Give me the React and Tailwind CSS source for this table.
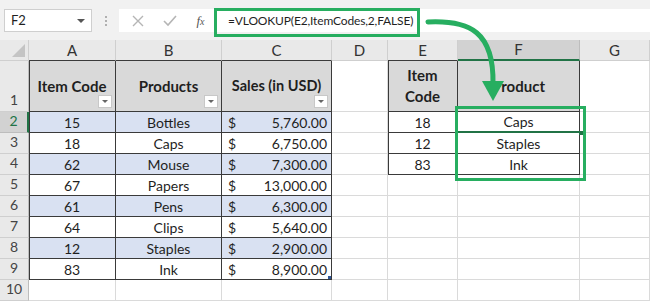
import React from "react";

const cols = ["A", "B", "C", "D", "E", "F", "G"];

const data = [
  { code: "15", product: "Bottles", sales: "5,760.00" },
  { code: "18", product: "Caps", sales: "6,750.00" },
  { code: "62", product: "Mouse", sales: "7,300.00" },
  { code: "67", product: "Papers", sales: "13,000.00" },
  { code: "61", product: "Pens", sales: "6,300.00" },
  { code: "64", product: "Clips", sales: "5,640.00" },
  { code: "12", product: "Staples", sales: "2,900.00" },
  { code: "83", product: "Ink", sales: "8,900.00" },
];

const lookup = [
  { code: "18", product: "Caps" },
  { code: "12", product: "Staples" },
  { code: "83", product: "Ink" },
];

const FilterButton = () => (
  <div className="absolute right-[3px] bottom-[3px] w-[14px] h-[13px] bg-white border border-[#c8c8c8] flex items-center justify-center">
    <div className="w-0 h-0 border-l-[3px] border-r-[3px] border-t-[3px] border-l-transparent border-r-transparent border-t-[#666]" />
  </div>
);

const RowHead = ({ n, active }) => (
  <div
    className={`flex items-end justify-center pb-[1px] border-b border-r text-[14px] ${
      active
        ? "bg-[#d2d2d2] text-[#217346] border-b-[#bdbdbd] border-r-[#217346] border-r-2"
        : "bg-[#e9e9e9] text-[#444] border-b-[#cfcfcf] border-r-[#bdbdbd]"
    }`}
  >
    {n}
  </div>
);

const Blank = () => <div className="bg-white border-r border-b border-[#dadada]" />;

export default function App() {
  return (
    <div
      className="relative w-[650px] h-[304px] overflow-hidden bg-white text-[#1f1f1f]"
      style={{ fontFamily: "Lato, 'Open Sans', sans-serif" }}
    >
      {/* formula bar */}
      <div className="h-[40px] bg-[#f1f1f1] flex items-start pt-[9px] pl-[4px]">
        <div className="w-[88px] h-[23px] bg-white border border-[#cfcfcf] flex items-center justify-between pl-[6px] pr-[6px] text-[13px]">
          <span>F2</span>
          <div className="w-0 h-0 border-l-[4px] border-r-[4px] border-t-[4px] border-l-transparent border-r-transparent border-t-[#555]" />
        </div>
        <div className="w-[27px] h-[23px] flex flex-col items-center justify-center gap-[2px]">
          <div className="w-[2px] h-[2px] bg-[#b0b0b0]" />
          <div className="w-[2px] h-[2px] bg-[#b0b0b0]" />
          <div className="w-[2px] h-[2px] bg-[#b0b0b0]" />
        </div>
        <div className="flex-1 h-[23px] bg-white flex items-center">
          <div className="w-[95px] flex items-center justify-around pl-[4px] text-[#bdbdbd]">
            <svg width="12" height="12" viewBox="0 0 12 12">
              <path d="M1 1 L11 11 M11 1 L1 11" stroke="#b5b5b5" strokeWidth="1.4" fill="none" />
            </svg>
            <svg width="14" height="12" viewBox="0 0 14 12">
              <path d="M1 6 L5 10 L13 1" stroke="#b5b5b5" strokeWidth="1.6" fill="none" />
            </svg>
            <span className="italic text-[13px] text-[#555]" style={{ fontFamily: "'Liberation Serif', serif" }}>
              f<span className="text-[10px]">x</span>
            </span>
          </div>
          <div className="pl-[14px] text-[12px] tracking-[-0.15px] text-[#1f1f1f]">=VLOOKUP(E2,ItemCodes,2,FALSE)</div>
        </div>
      </div>

      {/* sheet */}
      <div className="grid grid-cols-[29px_87px_106px_110px_56px_70px_122px_70px] grid-rows-[21px_51px_repeat(9,21px)] text-[14px]">
        {/* column headers */}
        <div className="relative bg-[#e9e9e9] border-r border-b border-[#cfcfcf]">
          <svg className="absolute right-[3px] bottom-[3px]" width="13" height="13" viewBox="0 0 13 13">
            <polygon points="13,0 13,13 0,13" fill="#c4c4c4" />
          </svg>
        </div>
        {cols.map((c) => (
          <div
            key={c}
            className={`flex items-center justify-center border-r text-[15px] ${
              c === "F"
                ? "bg-[#d2d2d2] text-[#333] border-b-2 border-b-[#217346] border-r-[#bdbdbd]"
                : `bg-[#e9e9e9] text-[#333] border-r-[#cfcfcf] border-b ${
                    c === "D" || c === "G" ? "border-b-[#cfcfcf]" : "border-b-[#3a3a3a]"
                  }`
            }`}
          >
            {c}
          </div>
        ))}

        {/* row 1 */}
        <RowHead n={1} />
        <div className="relative bg-[#d9d9d9] border-r border-b border-[#3a3a3a] shadow-[inset_1px_0_0_#3a3a3a] flex items-center justify-center font-bold text-[15px]">
          Item Code
          <FilterButton />
        </div>
        <div className="relative bg-[#d9d9d9] border-r border-b border-[#3a3a3a] flex items-center justify-center font-bold text-[15px]">
          Products
          <FilterButton />
        </div>
        <div className="relative bg-[#d9d9d9] border-r border-b border-[#3a3a3a] flex items-center justify-center font-bold text-[14.5px]">
          Sales (in USD)
          <FilterButton />
        </div>
        <div className="bg-white border-r border-b border-[#dadada]" />
        <div className="bg-[#d9d9d9] border-r border-b border-[#3a3a3a] shadow-[inset_1px_0_0_#3a3a3a] flex items-center justify-center text-center font-bold text-[15px] leading-[21px]">
          Item
          <br />
          Code
        </div>
        <div className="bg-[#d9d9d9] border-r border-b border-[#3a3a3a] flex items-center justify-center font-bold text-[15px]">
          Product
        </div>
        <Blank />

        {/* rows 2-10 */}
        {Array.from({ length: 9 }).map((_, i) => {
          const row = data[i];
          const look = lookup[i];
          const shade = i % 2 === 0 ? "bg-[#d9e1f2]" : "bg-white";
          return (
            <React.Fragment key={i}>
              <RowHead n={i + 2} active={i === 0} />
              {row ? (
                <>
                  <div className={`${shade} border-r border-b border-[#3a3a3a] shadow-[inset_1px_0_0_#3a3a3a] flex items-center justify-center`}>
                    {row.code}
                  </div>
                  <div className={`${shade} border-r border-b border-[#3a3a3a] flex items-center justify-center`}>
                    {row.product}
                  </div>
                  <div className={`${shade} relative border-r border-b border-[#3a3a3a] flex items-center justify-between pl-[6px] pr-[4px]`}>
                    <span>$</span>
                    <span>{row.sales}</span>
                    {i === 7 && <div className="absolute right-0 bottom-0 w-[3px] h-[3px] bg-[#2f5597]" />}
                  </div>
                </>
              ) : (
                <>
                  <Blank />
                  <Blank />
                  <Blank />
                </>
              )}
              <Blank />
              {look ? (
                <>
                  <div className="bg-white border-r border-b border-[#3a3a3a] shadow-[inset_1px_0_0_#3a3a3a] flex items-center justify-center">
                    {look.code}
                  </div>
                  <div
                    className={`bg-white border-r border-b flex items-center justify-center ${
                      i === 0 ? "border-b-[#217346] border-b-2 border-r-[#3a3a3a]" : "border-[#3a3a3a]"
                    }`}
                  >
                    {look.product}
                  </div>
                </>
              ) : (
                <>
                  <Blank />
                  <Blank />
                </>
              )}
              <Blank />
            </React.Fragment>
          );
        })}
      </div>

      {/* highlight boxes */}
      <div className="absolute left-[214px] top-[8px] w-[206px] h-[29px] border-[3px] border-[#27ae60]" />
      <div className="absolute left-[455px] top-[106px] w-[131px] h-[75px] border-[3px] border-[#27ae60]" />
      <div className="absolute left-[579px] top-[131px] w-[4px] h-[4px] bg-[#217346]" />

      {/* arrow */}
      <svg className="absolute left-0 top-0" width="650" height="304" viewBox="0 0 650 304">
        <path d="M428 22 C 470 20, 494 32, 493 84" stroke="#27ae60" strokeWidth="5" fill="none" strokeLinecap="round" />
        <polygon points="482,81 504,81 493,101" fill="#27ae60" />
      </svg>
    </div>
  );
}
